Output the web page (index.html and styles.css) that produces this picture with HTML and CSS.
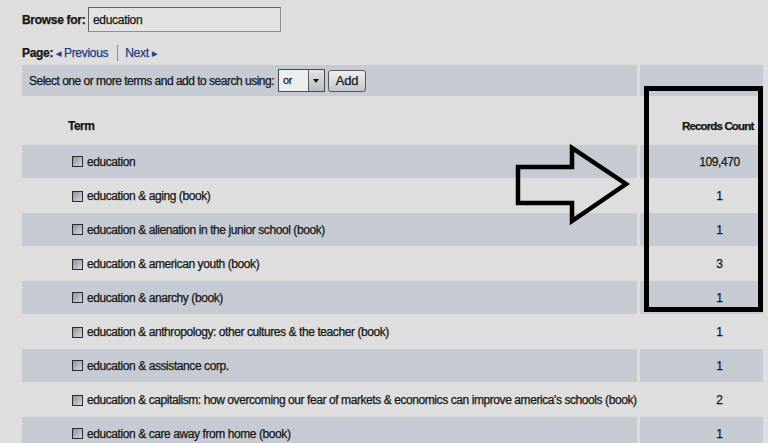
FILE: index.html
```html
<!DOCTYPE html>
<html>
<head>
<meta charset="utf-8">
<link rel="stylesheet" href="styles.css">
</head>
<body>
<div class="page">
  <div class="browse">
    <span class="lbl">Browse for:</span>
    <div class="input">education</div>
  </div>
  <div class="pager">
    <span class="lbl">Page:</span>
    <a class="link"><span class="arr">&#9664;</span> Previous</a>
    <span class="sep"></span>
    <a class="link">Next <span class="arr">&#9654;</span></a>
  </div>
  <div class="results">
    <div class="row toolbar">
      <div class="cell term stripe select-cell">
        <span class="sel-text">Select one or more terms and add to search using:</span>
        <div class="dropdown"><span class="dd-val">or</span><span class="dd-btn"><span class="tri"></span></span></div>
        <div class="addbtn">Add</div>
      </div>
      <div class="cell count stripe"></div>
    </div>
    <div class="row head">
      <div class="cell term"><span class="th">Term</span></div>
      <div class="cell count"><span class="th th-count">Records Count</span></div>
    </div>
    <div class="row s"><div class="cell term"><span class="cb"></span>education</div><div class="cell count">109,470</div></div>
    <div class="row"><div class="cell term"><span class="cb"></span>education &amp; aging (book)</div><div class="cell count">1</div></div>
    <div class="row s"><div class="cell term"><span class="cb"></span>education &amp; alienation in the junior school (book)</div><div class="cell count">1</div></div>
    <div class="row"><div class="cell term"><span class="cb"></span>education &amp; american youth (book)</div><div class="cell count">3</div></div>
    <div class="row s"><div class="cell term"><span class="cb"></span>education &amp; anarchy (book)</div><div class="cell count">1</div></div>
    <div class="row"><div class="cell term"><span class="cb"></span>education &amp; anthropology: other cultures &amp; the teacher (book)</div><div class="cell count">1</div></div>
    <div class="row s"><div class="cell term"><span class="cb"></span>education &amp; assistance corp.</div><div class="cell count">1</div></div>
    <div class="row"><div class="cell term"><span class="cb"></span>education &amp; capitalism: how overcoming our fear of markets &amp; economics can improve america's schools (book)</div><div class="cell count">2</div></div>
    <div class="row s"><div class="cell term"><span class="cb"></span>education &amp; care away from home (book)</div><div class="cell count">1</div></div>
  </div>
  <svg class="annot" width="768" height="443" viewBox="0 0 768 443">
    <rect x="646.5" y="88.5" width="114" height="221" fill="none" stroke="#000" stroke-width="5"/>
    <path d="M518 167 H572 V148 L626 184 L572 221 V203 H518 Z" fill="none" stroke="#000" stroke-width="4.5" stroke-linejoin="miter"/>
  </svg>
</div>
</body>
</html>
```
FILE: styles.css
```css
html, body {
  margin: 0;
  padding: 0;
  background: #dddedd;
}
body {
  font-family: "Liberation Sans", Arial, sans-serif;
  font-size: 12px;
  color: #151515;
  width: 768px;
  height: 443px;
  overflow: hidden;
  -webkit-text-stroke: 0.25px #151515;
}
.page {
  position: relative;
  padding-left: 22px;
  padding-top: 7px;
}
.lbl {
  font-weight: bold;
  letter-spacing: -0.3px;
}
.browse {
  display: flex;
  align-items: center;
  height: 25px;
}
.browse .lbl {
  width: 66px;
}
.input {
  box-sizing: border-box;
  width: 193px;
  height: 25px;
  border: 1px solid #5e5f62;
  border-right-color: #8c8d90;
  border-bottom-color: #8c8d90;
  background: #e2e3e2;
  padding: 5px 4px;
  letter-spacing: -0.3px;
}
.pager {
  display: flex;
  align-items: center;
  height: 20px;
  margin-top: 11px;
  letter-spacing: -0.3px;
}
.pager .link {
  color: #1d3a86;
  margin-left: 3px;
  -webkit-text-stroke: 0.25px #1d3a86;
}
.arr {
  font-size: 7px;
  vertical-align: 1px;
}
.pager .sep {
  width: 1px;
  height: 16px;
  background: #8a8d92;
  margin: 0 4px 0 9px;
}
.results {
  margin-top: 2px;
  width: 741px;
}
.row {
  display: flex;
  height: 34px;
}
.cell {
  display: flex;
  align-items: center;
  letter-spacing: -0.42px;
  white-space: nowrap;
}
.term {
  width: 615px;
  padding-left: 50px;
  box-sizing: border-box;
}
.count {
  width: 123px;
  margin-left: 3px;
  justify-content: center;
  padding-left: 36px;
  box-sizing: border-box;
}
.row.s .cell, .stripe {
  background: #c6cbd3;
}
.row.s .cell {
  height: 33px;
}
.toolbar {
  height: 31px;
}
.select-cell {
  padding-left: 7px;
}
.sel-text {
  letter-spacing: -0.5px;
}
.dropdown {
  display: flex;
  margin-left: 4px;
  width: 47px;
  height: 23px;
  box-sizing: border-box;
  border: 1px solid #4a4b4f;
  background: #eceded;
}
.dd-val {
  flex: 1;
  padding-left: 4px;
  line-height: 21px;
  font-size: 11px;
}
.dd-btn {
  width: 15px;
  border-left: 1px solid #5b5c60;
  background: linear-gradient(#e2e3e6, #b9bcc3);
  display: flex;
  align-items: center;
  justify-content: center;
}
.tri {
  width: 0;
  height: 0;
  border-left: 3.5px solid transparent;
  border-right: 3.5px solid transparent;
  border-top: 4px solid #111;
}
.addbtn {
  margin-left: 3px;
  width: 38px;
  height: 22px;
  box-sizing: border-box;
  border: 1px solid #55575c;
  border-radius: 3px;
  background: linear-gradient(#eeeff1, #c3c6cc);
  display: flex;
  align-items: center;
  justify-content: center;
  font-size: 13px;
  letter-spacing: -0.2px;
}
.head {
  height: 49px;
}
.head .cell {
  padding-top: 10px;
}
.head .term {
  padding-left: 46px;
}
.th {
  font-weight: bold;
  letter-spacing: -0.5px;
}
.th-count {
  font-size: 11.5px;
  letter-spacing: -0.85px;
}
.head .count {
  justify-content: flex-start;
  padding-left: 42px;
}
.cb {
  width: 11px;
  height: 11px;
  box-sizing: border-box;
  border: 1px solid #2a2b2e;
  background: linear-gradient(135deg, #8e9196, #d6d8dc);
  margin-right: 4px;
  flex: none;
  -webkit-text-stroke: 0;
}
.annot {
  position: absolute;
  left: 0;
  top: 0;
  pointer-events: none;
}
```
